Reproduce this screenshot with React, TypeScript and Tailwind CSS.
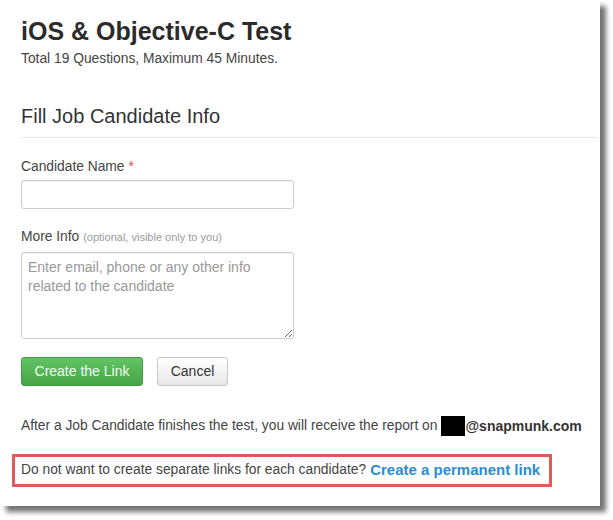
export default function App() {
  return (
    <div className="min-h-[520px] bg-white font-['Liberation_Sans',Arial,sans-serif] text-[#333]">
      <div className="flex h-[506px] w-[600px] flex-col bg-white pl-[21px] shadow-[6px_6px_5px_rgba(0,0,0,0.55)]">
        <h1 className="mt-[17px] text-[25px] font-bold leading-[28px] text-[#2b2b2b]">
          iOS &amp; Objective-C Test
        </h1>
        <p className="mt-[4px] text-[13.8px] leading-[20px] text-[#444]">
          Total 19 Questions, Maximum 45 Minutes.
        </p>

        <div className="mr-[3px] mt-[35px] border-b border-[#e5e5e5] pb-[9px]">
          <h2 className="text-[20px] leading-[24px] text-[#333]">Fill Job Candidate Info</h2>
        </div>

        <form className="flex flex-col" onSubmit={(e) => e.preventDefault()}>
          <label className="mt-[19px] text-[13.8px] leading-[20px] text-[#444]">
            Candidate Name <span className="text-[#e05050]">*</span>
          </label>
          <input
            type="text"
            className="mt-[3px] h-[29px] w-[273px] rounded-[3px] border border-[#ccc] px-[6px] text-[14px] shadow-[inset_0_1px_1px_rgba(0,0,0,0.06)] outline-none"
          />

          <label className="mt-[18px] text-[13.8px] leading-[20px] text-[#444]">
            More Info{' '}
            <span className="text-[11px] text-[#999]">(optional, visible only to you)</span>
          </label>
          <textarea
            placeholder="Enter email, phone or any other info related to the candidate"
            className="mt-[5px] h-[87px] w-[273px] rounded-[3px] border border-[#ccc] px-[6px] pt-[5px] text-[14px] leading-[19px] shadow-[inset_0_1px_1px_rgba(0,0,0,0.06)] outline-none placeholder:text-[#999]"
          />

          <div className="mt-[18px] flex gap-[14px]">
            <button
              type="submit"
              className="h-[29px] w-[122px] rounded-[3px] border border-[#419c41] bg-gradient-to-b from-[#62c462] to-[#47a447] text-[14px] text-[#f2fbf2]"
            >
              Create the Link
            </button>
            <button
              type="button"
              className="h-[29px] w-[71px] rounded-[3px] border border-[#c8c8c8] bg-gradient-to-b from-white to-[#e8e8e8] text-[14px] text-[#333]"
            >
              Cancel
            </button>
          </div>
        </form>

        <div className="mt-[30px] flex h-[20px] items-center text-[13.8px] text-[#444]">
          <span>After a Job Candidate finishes the test, you will receive the report on</span>
          <span className="ml-[4px] h-[20px] w-[24px] bg-black" />
          <span className="text-[14px] font-bold text-[#333]">@snapmunk.com</span>
        </div>

        <div className="-ml-[9px] mt-[18px] flex h-[33px] w-[540px] items-center border-[3px] border-[#e05a5a] pl-[6px] text-[13.8px] text-[#444]">
          <span>Do not want to create separate links for each candidate?</span>
          <a href="#" className="ml-[4px] text-[15px] font-bold text-[#2a8dd4]">
            Create a permanent link
          </a>
        </div>
      </div>
    </div>
  );
}
